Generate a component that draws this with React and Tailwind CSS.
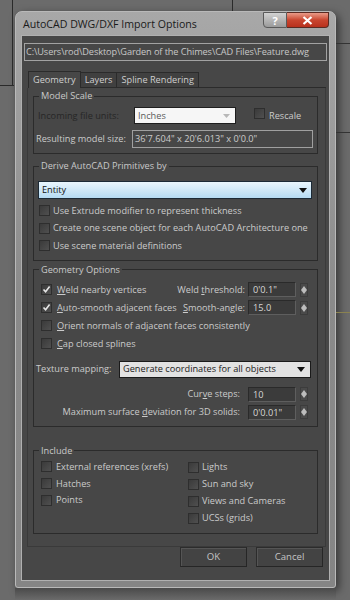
import React from "react";

const F = { fontFamily: '"Open Sans", "Noto Sans", sans-serif' };

function Check({ checked }) {
  return (
    <span className="inline-flex w-[11px] h-[11px] shrink-0 items-center justify-center border border-[#2e2e2e] bg-gradient-to-br from-[#3a3a3a] to-[#505050]">
      {checked && (
        <svg width="9" height="9" viewBox="0 0 9 9">
          <path d="M1.5 4.5 L3.6 6.8 L7.6 1.6" fill="none" stroke="#e6e6e6" strokeWidth="1.6" />
        </svg>
      )}
    </span>
  );
}

function Spinner() {
  return (
    <div className="ml-[4px] w-[8px] h-[14px] flex flex-col items-center justify-between py-[2px] bg-[#4a4a4a] border border-[#3c3c3c]">
      <svg width="6" height="4" viewBox="0 0 6 4"><path d="M0 4 L3 0 L6 4 Z" fill="#bdbdbd" /></svg>
      <svg width="6" height="4" viewBox="0 0 6 4"><path d="M0 0 L3 4 L6 0 Z" fill="#bdbdbd" /></svg>
    </div>
  );
}

function NumField({ value }) {
  return (
    <div className="flex items-center">
      <div className="w-[48px] h-[15px] bg-[#3b3b3b] border border-[#2a2a2a] border-b-[#5e5e5e] border-r-[#5e5e5e] text-[#d6d6d6] leading-[13px] pl-[4px]">
        {value}
      </div>
      <Spinner />
    </div>
  );
}

function Group({ label, className, children }) {
  return (
    <fieldset className={"min-w-0 border border-[#2b2b2b] ml-[5px] mr-[7px] " + (className || "")}>
      <legend className="ml-[5px] px-[2px] text-[#c9c9c9] leading-[14px]">{label}</legend>
      {children}
    </fieldset>
  );
}

function U({ children }) {
  return <span className="underline underline-offset-[1px]">{children}</span>;
}

export default function App() {
  return (
    <div
      className="relative w-[350px] h-[600px] overflow-hidden bg-[#6b6b6b]"
      style={F}
    >
      {/* background viewport lines */}
      <div className="absolute left-[12px] top-0 w-[1px] h-[85px] bg-[#2a2a2a]" />
      <div className="absolute left-0 top-[85px] w-[14px] h-[1px] bg-[#2a2a2a]" />
      <div className="absolute left-[232px] top-0 w-[1px] h-[11px] bg-[#2a2a2a]" />
      <div className="absolute left-[336px] top-[43px] w-[14px] h-[1px] bg-[#333]" />
      <div className="absolute left-[336px] top-[132px] w-[14px] h-[1px] bg-[#333]" />
      <div className="absolute left-[336px] top-[312px] w-[14px] h-[1px] bg-[#8a8250]" />
      <div className="absolute left-[15px] top-[588px] w-[321px] h-[12px] bg-gradient-to-b from-[#4a4a4a] to-[#6b6b6b]" />

      <div className="pt-[11px] pl-[15px]">
        <div className="w-[321px] h-[577px] flex flex-col rounded-t-[7px] rounded-b-[3px] border border-[#b9b9b9] bg-gradient-to-b from-[#a8a8a8] via-[#8a8a8a] to-[#858585] shadow-[3px_3px_8px_rgba(0,0,0,0.5)]">
          {/* title bar */}
          <div className="h-[23px] flex items-start relative">
            <div className="pl-[7px] pt-[5px] text-[10.6px] leading-[14px] text-[#1a1a1a]">
              AutoCAD DWG/DXF Import Options
            </div>
            <div className="ml-auto mr-[6px] flex h-[16px]">
              <div className="w-[24px] h-[16px] rounded-bl-[4px] border border-[#5a5a5a] bg-gradient-to-b from-[#d2d2d2] to-[#9a9a9a] flex items-center justify-center text-white text-[11px] font-bold leading-none">
                ?
              </div>
              <div className="w-[42px] h-[16px] rounded-br-[4px] border border-l-0 border-[#5a2a22] bg-gradient-to-b from-[#e89a88] via-[#c9452f] to-[#b8301c] flex items-center justify-center">
                <svg width="11" height="9" viewBox="0 0 11 9">
                  <path d="M1.5 1 L9.5 8 M9.5 1 L1.5 8" stroke="#fff" strokeWidth="2.2" />
                </svg>
              </div>
            </div>
          </div>

          {/* client */}
          <div className="mx-[5px] mb-[6px] flex-1 border border-[#b0b0b0] bg-[#474747] flex flex-col text-[9.2px]">
            <div className="mx-[2px] mt-[7px] h-[18px] border border-[#a2a2a2] text-[#c8c8c8] text-[9.2px] tracking-[-0.1px] leading-[16px] pl-[1px] whitespace-nowrap overflow-hidden">
              C:\Users\rod\Desktop\Garden of the Chimes\CAD Files\Feature.dwg
            </div>

            {/* tabs */}
            <div className="mt-[10px] ml-[6px] flex items-end h-[17px] text-[#cfcfcf]">
              <div className="h-[17px] px-[4px] border border-b-0 border-[#2b2b2b] bg-[#474747] leading-[15px]">Geometry</div>
              <div className="h-[16px] px-[4px] border border-l-0 border-[#2b2b2b] bg-[#404040] leading-[14px]">Layers</div>
              <div className="h-[16px] px-[4px] border border-l-0 border-[#2b2b2b] bg-[#404040] leading-[14px]">Spline Rendering</div>
              <div className="flex-1 border-b border-[#2b2b2b] mr-[3px]" />
            </div>

            {/* tab page */}
            <div className="ml-[5px] mr-[3px] border-x border-b border-[#3a3a3a] pt-[1px] text-[#cbcbcb] leading-[14px] whitespace-nowrap">
              <Group label="Model Scale" className="pb-[5px]">
                <div className="mt-[4px] flex items-center h-[17px]">
                  <div className="ml-[4px] w-[96px] text-[#262626]">Incoming file units:</div>
                  <div className="w-[102px] h-[17px] bg-[#f6f6f6] border border-[#1e1e1e] flex items-center pl-[3px] text-[#5a5a5a]">
                    Inches
                    <svg className="ml-auto mr-[5px]" width="7" height="4" viewBox="0 0 7 4"><path d="M0 0 L7 0 L3.5 4 Z" fill="#b8b8b8" /></svg>
                  </div>
                  <div className="ml-[18px]"><Check /></div>
                  <div className="ml-[4px]">Rescale</div>
                </div>
                <div className="mt-[6px] flex items-center h-[18px]">
                  <div className="ml-[2px] w-[96px]">Resulting model size:</div>
                  <div className="w-[181px] h-[18px] border border-[#a0a0a0] pl-[2px] leading-[16px]">
                    36'7.604" x 20'6.013" x 0'0.0"
                  </div>
                </div>
              </Group>

              <Group label="Derive AutoCAD Primitives by" className="mt-[5px] pb-[5px]">
                <div className="mt-[8px] ml-[4px] w-[274px] h-[18px] border border-[#1c2a36] bg-gradient-to-b from-[#eaf6fd] to-[#b5dbf3] flex items-center pl-[3px] text-[#111]">
                  Entity
                  <svg className="ml-auto mr-[4px]" width="8" height="5" viewBox="0 0 8 5"><path d="M0 0 L8 0 L4 5 Z" fill="#111" /></svg>
                </div>
                <div className="mt-[3px]">
                  {[
                    "Use Extrude modifier to represent thickness",
                    "Create one scene object for each AutoCAD Architecture one",
                    "Use scene material definitions",
                  ].map((t) => (
                    <div key={t} className="h-[17.5px] flex items-center pl-[5px]">
                      <Check />
                      <span className="ml-[3px]">{t}</span>
                    </div>
                  ))}
                </div>
              </Group>

              <Group label="Geometry Options" className="mt-[2px] pb-[6px]">
                <div className="mt-[4px]">
                  <div className="h-[18px] flex items-center pl-[7px] pr-[9px]">
                    <Check checked />
                    <span className="ml-[5px]"><U>W</U>eld nearby vertices</span>
                    <span className="ml-auto mr-[3px]">Weld <U>t</U>hreshold:</span>
                    <NumField value={"0'0.1\""} />
                  </div>
                  <div className="h-[18px] flex items-center pl-[7px] pr-[9px]">
                    <Check checked />
                    <span className="ml-[5px]"><U>A</U>uto-smooth adjacent faces</span>
                    <span className="ml-auto mr-[3px]"><U>S</U>mooth-angle:</span>
                    <NumField value="15.0" />
                  </div>
                  <div className="h-[18px] flex items-center pl-[7px]">
                    <Check />
                    <span className="ml-[5px]"><U>O</U>rient normals of adjacent faces consistently</span>
                  </div>
                  <div className="h-[18px] flex items-center pl-[7px]">
                    <Check />
                    <span className="ml-[5px]"><U>C</U>ap closed splines</span>
                  </div>
                </div>
                <div className="mt-[8px] flex items-center h-[17px]">
                  <span className="ml-[2px] w-[83px]">Texture mapping:</span>
                  <div className="w-[192px] h-[17px] bg-[#e2e2e2] border border-[#1a1a1a] flex items-center pl-[3px] text-[#1a1a1a]">
                    Generate coordinates for all objects
                    <svg className="ml-auto mr-[5px]" width="8" height="5" viewBox="0 0 8 5"><path d="M0 0 L8 0 L4 5 Z" fill="#111" /></svg>
                  </div>
                </div>
                <div className="mt-[9px] flex items-center justify-end h-[15px] pr-[9px]">
                  <span className="mr-[8px]">Cur<U>v</U>e steps:</span>
                  <NumField value="10" />
                </div>
                <div className="mt-[3px] flex items-center justify-end h-[15px] pr-[9px]">
                  <span className="mr-[8px]">Maximum surface <U>d</U>eviation for 3D solids:</span>
                  <NumField value={"0'0.01\""} />
                </div>
              </Group>

              <Group label="Include" className="mt-[17px] pb-[6px]">
                <div className="mt-[1px] flex">
                  <div className="w-[154px] pl-[7px]">
                    {["External references (xrefs)", "Hatches", "Points"].map((t) => (
                      <div key={t} className="h-[16.7px] flex items-center">
                        <Check />
                        <span className="ml-[4px]">{t}</span>
                      </div>
                    ))}
                  </div>
                  <div>
                    {["Lights", "Sun and sky", "Views and Cameras", "UCSs (grids)"].map((t) => (
                      <div key={t} className="h-[17px] flex items-center">
                        <Check />
                        <span className="ml-[3px]">{t}</span>
                      </div>
                    ))}
                  </div>
                </div>
              </Group>

              <div className="h-[12px]" />
            </div>

            {/* buttons */}
            <div className="mt-auto mb-[13px] flex justify-end pr-[6px] gap-[9px] text-[9.6px] text-[#c4c4c4]">
              <div className="w-[67px] h-[20px] flex items-center justify-center bg-[#434343] border border-[#2c2c2c] border-r-[#262626] border-b-[#262626] shadow-[inset_1px_1px_0_#555]">
                OK
              </div>
              <div className="w-[67px] h-[20px] flex items-center justify-center bg-[#434343] border border-[#2c2c2c] border-r-[#262626] border-b-[#262626] shadow-[inset_1px_1px_0_#555]">
                Cancel
              </div>
            </div>
          </div>
        </div>
      </div>
    </div>
  );
}
